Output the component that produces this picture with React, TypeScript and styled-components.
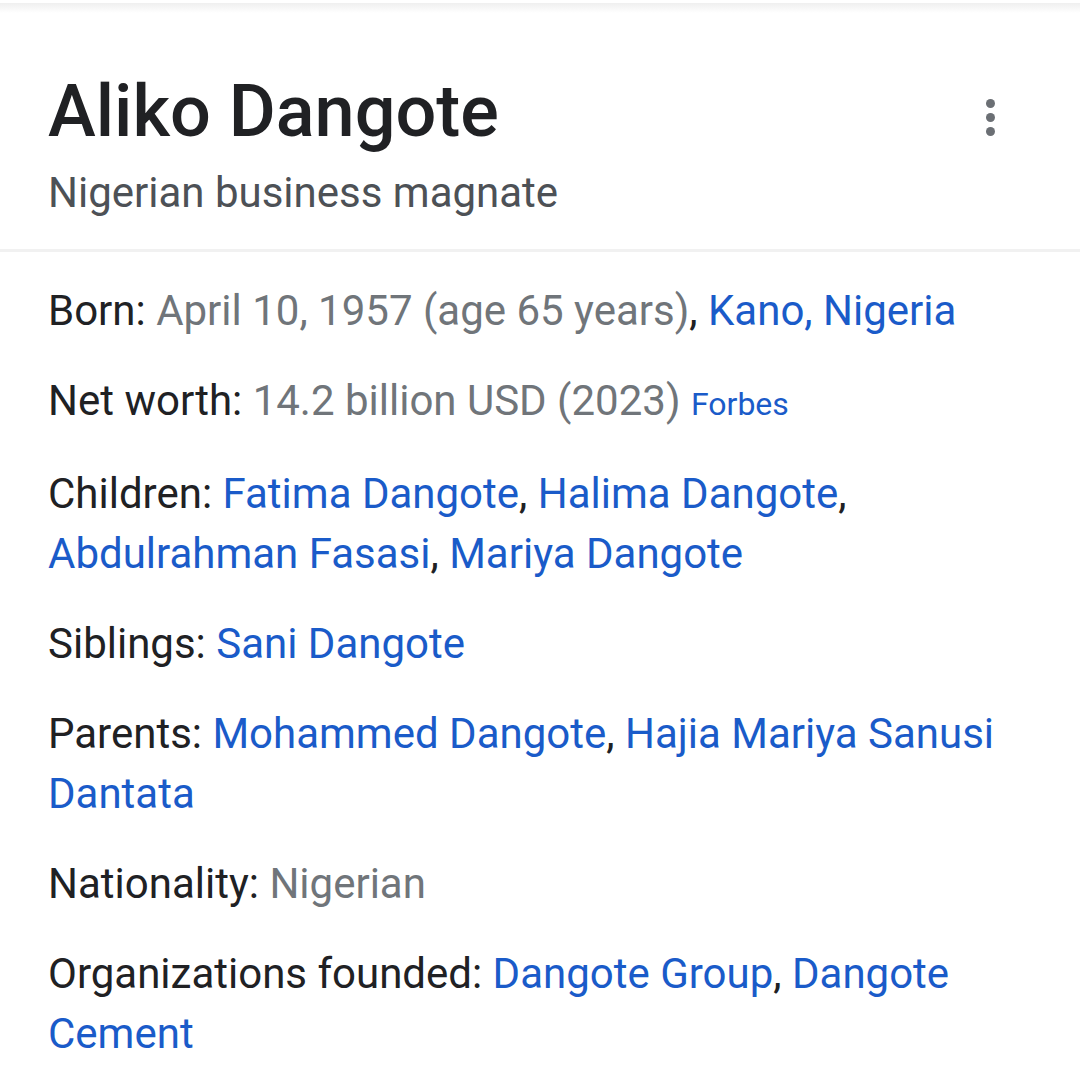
import {createGlobalStyle, styled} from "styled-components";

const GlobalStyle = createGlobalStyle`
    html, body {
        margin: 0;
        padding: 0;
        background: #ffffff;
    }

    body {
        font-family: Roboto, "Noto Sans", Arial, sans-serif;
        -webkit-font-smoothing: antialiased;
    }
`

const Page = styled.div`
    width: 1080px;
    min-height: 1087px;
    background: #ffffff;
`

const TopShadow = styled.div`
    height: 10px;
    margin-top: 3px;
    background: linear-gradient(to bottom, #efefef, #ffffff);
`

const Header = styled.header`
    display: flex;
    justify-content: space-between;
    align-items: flex-start;
    padding: 55px 66px 30px 48px;
    border-bottom: 3px solid #f1f1f1;
`

const TitleBlock = styled.div`
    display: flex;
    flex-direction: column;
    gap: 11px;
`

const Title = styled.h1`
    margin: 0;
    font-size: 72px;
    line-height: 88px;
    font-weight: 500;
    color: #202124;
`

const Subtitle = styled.div`
    font-size: 42px;
    line-height: 52px;
    color: #4d5156;
`

const MenuButton = styled.button`
    display: flex;
    flex-direction: column;
    align-items: center;
    justify-content: center;
    gap: 5px;
    width: 48px;
    height: 48px;
    margin-top: 25px;
    padding: 0;
    border: none;
    background: transparent;

    span {
        width: 9px;
        height: 9px;
        border-radius: 50%;
        background: #6b6f74;
    }
`

const Facts = styled.div`
    display: flex;
    flex-direction: column;
    gap: 30px;
    padding: 29px 40px 0 48px;
`

const Row = styled.div`
    font-size: 42px;
    line-height: 60px;
    color: #202124;
`

const Value = styled.span`
    color: #70757a;
`

const Link = styled.a<{ $small?: boolean }>`
    color: #1a5bc9;
    text-decoration: none;
    font-size: ${p => p.$small ? '32px' : 'inherit'};
`

export default function App() {
    return (
        <Page>
            <GlobalStyle/>
            <TopShadow/>
            <Header>
                <TitleBlock>
                    <Title>Aliko Dangote</Title>
                    <Subtitle>Nigerian business magnate</Subtitle>
                </TitleBlock>
                <MenuButton aria-label="More options">
                    <span/>
                    <span/>
                    <span/>
                </MenuButton>
            </Header>

            <Facts>
                <Row>
                    Born: <Value>April 10, 1957 (age 65 years)</Value>, <Link>Kano, Nigeria</Link>
                </Row>
                <Row>
                    Net worth: <Value>14.2 billion USD (2023)</Value> <Link $small>Forbes</Link>
                </Row>
                <Row>
                    Children: <Link>Fatima Dangote</Link>, <Link>Halima Dangote</Link>, <Link>Abdulrahman Fasasi</Link>, <Link>Mariya Dangote</Link>
                </Row>
                <Row>
                    Siblings: <Link>Sani Dangote</Link>
                </Row>
                <Row>
                    Parents: <Link>Mohammed Dangote</Link>, <Link>Hajia Mariya Sanusi Dantata</Link>
                </Row>
                <Row>
                    Nationality: <Value>Nigerian</Value>
                </Row>
                <Row>
                    Organizations founded: <Link>Dangote Group</Link>, <Link>Dangote Cement</Link>
                </Row>
            </Facts>
        </Page>
    )
}
